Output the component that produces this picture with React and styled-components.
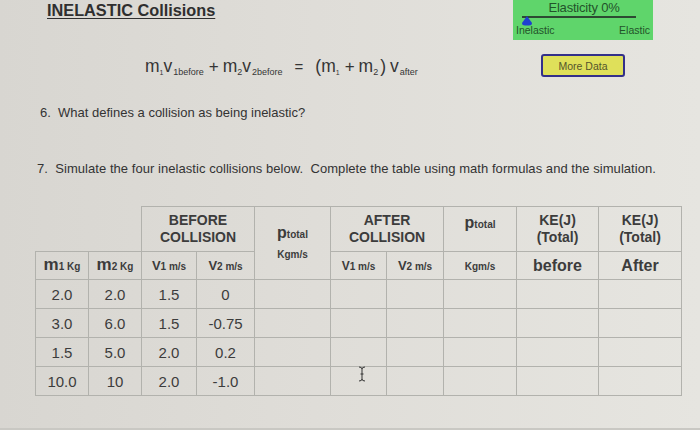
import React from "react";
import styled, { createGlobalStyle } from "styled-components";

const GlobalStyle = createGlobalStyle`
  html, body {
    margin: 0;
    padding: 0;
    background: #dcdad5;
  }
  * {
    box-sizing: border-box;
  }
`;

const Page = styled.div`
  width: 700px;
  height: 430px;
  overflow: hidden;
  position: relative;
  font-family: "Liberation Sans", Arial, sans-serif;
  color: #363636;
  background: linear-gradient(90deg, #d8d6d1 0%, #dfddd8 45%, #e6e5e0 100%);
  border-bottom: 2px solid #c9c8c3;
`;

const Header = styled.div`
  display: flex;
  justify-content: space-between;
  align-items: flex-start;
  padding: 0 47px 0 47px;
  height: 41px;
`;

const Title = styled.h1`
  margin: 0;
  padding-top: 1px;
  font-size: 16.3px;
  font-weight: bold;
  text-decoration: underline;
  text-underline-offset: 2px;
  text-decoration-thickness: 1px;
  color: #2f2f2f;
`;

const Elasticity = styled.div`
  width: 140px;
  height: 40px;
  background: #5fd56b;
  padding: 1px 3px 0 3px;
  display: flex;
  flex-direction: column;
  color: #23532a;
`;

const ElasticityLabel = styled.div`
  text-align: center;
  font-size: 13px;
  line-height: 13px;
  letter-spacing: -0.2px;
  padding-left: 2px;
`;

const Track = styled.div`
  position: relative;
  height: 9px;
  margin: 2px 14px 0 6px;
  border-top: 2px solid #2d4a32;
`;

const Thumb = styled.svg`
  position: absolute;
  left: -1px;
  top: -2px;
`;

const Ends = styled.div`
  display: flex;
  justify-content: space-between;
  font-size: 10.5px;
  line-height: 11px;
`;

const FormulaRow = styled.div`
  display: flex;
  align-items: center;
  height: 42px;
  margin-top: 5px;
  padding: 0 75px 0 145px;
`;

const Formula = styled.div`
  display: flex;
  align-items: baseline;
  font-size: 17.5px;
  color: #353535;
  margin-top: -2px;
`;

const Sub = styled.span`
  font-size: ${(p) => (p.$small ? "7px" : "9px")};
  position: relative;
  top: 3px;
  margin-left: ${(p) => p.$gap || 0}px;
`;

const Op = styled.span`
  font-size: ${(p) => p.$size || 17}px;
  margin: 0 ${(p) => p.$right || 6}px 0 ${(p) => p.$left || 6}px;
`;

const MoreData = styled.button`
  margin-left: auto;
  width: 84px;
  height: 23px;
  background: #dfe05a;
  border: 2px solid #33308a;
  border-radius: 3px;
  font-family: "Liberation Sans", Arial, sans-serif;
  font-size: 10.5px;
  color: #55552c;
  padding: 0;
  margin-top: -3px;
`;

const Question = styled.p`
  margin: 0;
  padding-left: ${(p) => p.$left}px;
  margin-top: ${(p) => p.$top}px;
  font-size: 13px;
  line-height: 16px;
  color: #333;
  letter-spacing: ${(p) => p.$spacing || 0}px;
`;

const Table = styled.table`
  margin: 29px 0 0 35px;
  border-collapse: collapse;
  table-layout: fixed;
  width: 646px;
`;

const Cell = styled.td`
  border: 1px solid #b2b2ad;
  padding: 0;
  text-align: center;
  vertical-align: middle;
  font-weight: ${(p) => (p.$bold ? "bold" : "normal")};
  font-size: ${(p) => p.$size || 14}px;
  color: #3c3c3c;
  line-height: ${(p) => p.$lh || 17}px;
  position: relative;
`;

const Blank = styled.td`
  border: none;
  padding: 0;
`;

const HeadRow = styled.tr`
  height: ${(p) => p.$h}px;
`;

const Big = styled.span`
  font-size: ${(p) => p.$size || 15}px;
  font-weight: bold;
`;

const Small = styled.span`
  font-size: 10px;
  font-weight: bold;
`;

const Cursor = styled.svg`
  position: absolute;
  left: 27px;
  top: -1px;
`;

const widths = [53, 53, 55, 58, 76, 56, 57, 73, 82, 83];

const rows = [
  ["2.0", "2.0", "1.5", "0"],
  ["3.0", "6.0", "1.5", "-0.75"],
  ["1.5", "5.0", "2.0", "0.2"],
  ["10.0", "10", "2.0", "-1.0"],
];

const PTotal = () => (
  <span>
    <Big $size={16}>p</Big>
    <Small>total</Small>
  </span>
);

const Sym = ({ letter, sub, size }) => (
  <span>
    <Big $size={size || 15}>{letter}</Big>
    <Small>{sub}</Small>
  </span>
);

export default function App() {
  return (
    <Page>
      <GlobalStyle />
      <Header>
        <Title>INELASTIC Collisions</Title>
        <Elasticity>
          <ElasticityLabel>Elasticity 0%</ElasticityLabel>
          <Track>
            <Thumb width="12" height="10" viewBox="0 0 12 10">
              <path d="M6 0 L11 7 Q11 9.5 8 9.5 L4 9.5 Q1 9.5 1 7 Z" fill="#1f3fd0" />
            </Thumb>
          </Track>
          <Ends>
            <span>Inelastic</span>
            <span>Elastic</span>
          </Ends>
        </Elasticity>
      </Header>

      <FormulaRow>
        <Formula>
          <span>m</span>
          <Sub $small>1</Sub>
          <span>v</span>
          <Sub $gap={1}>1before</Sub>
          <Op $left={5} $right={4}>+</Op>
          <span>m</span>
          <Sub>2</Sub>
          <span>v</span>
          <Sub $gap={1}>2before</Sub>
          <Op $left={12} $right={12} $size={15}>=</Op>
          <span>(m</span>
          <Sub $small>1</Sub>
          <Op $left={5} $right={4}>+</Op>
          <span>m</span>
          <Sub>2</Sub>
          <span style={{ marginLeft: 2 }}>)</span>
          <span style={{ marginLeft: 4 }}>v</span>
          <Sub $gap={1}>after</Sub>
        </Formula>
        <MoreData>More Data</MoreData>
      </FormulaRow>

      <Question $left={40} $top={17}>
        6.&nbsp;&nbsp;What defines a collision as being inelastic?
      </Question>
      <Question $left={37} $top={40} $spacing={0.05}>
        7.&nbsp;&nbsp;Simulate the four inelastic collisions below.&nbsp; Complete the table using math formulas and the simulation.
      </Question>

      <Table>
        <colgroup>
          {widths.map((w, i) => (
            <col key={i} style={{ width: w }} />
          ))}
        </colgroup>
        <tbody>
          <HeadRow $h={45}>
            <Blank />
            <Blank />
            <Cell colSpan={2} $bold $size={14} $lh={17}>
              BEFORE
              <br />
              COLLISION
            </Cell>
            <Cell rowSpan={2} $lh={19}>
              <PTotal />
              <br />
              <Small>Kgm/s</Small>
            </Cell>
            <Cell colSpan={2} $bold $size={14} $lh={17}>
              AFTER
              <br />
              COLLISION
            </Cell>
            <Cell style={{ verticalAlign: "top", paddingTop: 7 }}>
              <PTotal />
            </Cell>
            <Cell $bold $size={14} $lh={17}>
              KE(J)
              <br />
              (Total)
            </Cell>
            <Cell $bold $size={14} $lh={17}>
              KE(J)
              <br />
              (Total)
            </Cell>
          </HeadRow>
          <HeadRow $h={28}>
            <Cell>
              <Sym letter="m" sub="1 Kg" size={17} />
            </Cell>
            <Cell>
              <Sym letter="m" sub="2 Kg" size={17} />
            </Cell>
            <Cell>
              <Sym letter="V" sub="1 m/s" size={13} />
            </Cell>
            <Cell>
              <Sym letter="V" sub="2 m/s" size={13} />
            </Cell>
            <Cell>
              <Sym letter="V" sub="1 m/s" size={12} />
            </Cell>
            <Cell>
              <Sym letter="V" sub="2 m/s" size={13} />
            </Cell>
            <Cell>
              <Small>Kgm/s</Small>
            </Cell>
            <Cell $bold $size={16}>
              before
            </Cell>
            <Cell $bold $size={16}>
              After
            </Cell>
          </HeadRow>
          {rows.map((r, i) => (
            <HeadRow $h={29} key={i}>
              {r.map((v, j) => (
                <Cell key={j} $size={15}>
                  {v}
                </Cell>
              ))}
              <Cell />
              <Cell>
                {i === 3 && (
                  <Cursor width="8" height="16" viewBox="0 0 8 16">
                    <path
                      d="M1 1 Q4 1 4 3 L4 13 Q4 15 1 15 M7 1 Q4 1 4 3 M4 13 Q4 15 7 15 M2.5 8 L5.5 8"
                      stroke="#333"
                      strokeWidth="1"
                      fill="none"
                    />
                  </Cursor>
                )}
              </Cell>
              <Cell />
              <Cell />
              <Cell />
              <Cell />
            </HeadRow>
          ))}
        </tbody>
      </Table>
    </Page>
  );
}
